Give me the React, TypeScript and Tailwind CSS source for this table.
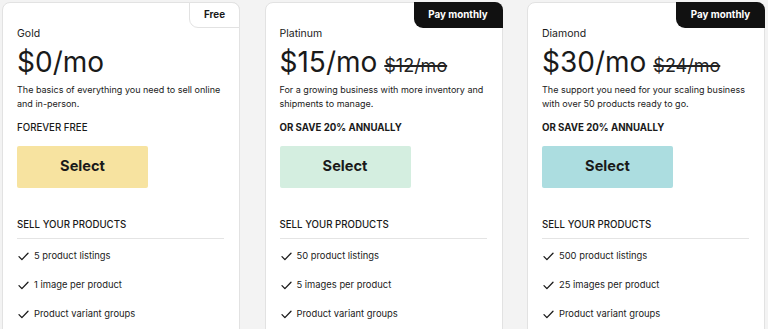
import React from "react";

type Plan = {
  name: string;
  price: string;
  old?: string;
  desc: string[];
  note: string;
  noteBold: boolean;
  btn: string;
  dark: boolean;
  items: string[];
};

const plans: Plan[] = [
  {
    name: "Gold",
    price: "$0/mo",
    desc: ["The basics of everything you need to sell online", "and in-person."],
    note: "FOREVER FREE",
    noteBold: false,
    btn: "bg-[#f7e3a0]",
    dark: false,
    items: ["5 product listings", "1 image per product", "Product variant groups"],
  },
  {
    name: "Platinum",
    price: "$15/mo",
    old: "$12/mo",
    desc: ["For a growing business with more inventory and", "shipments to manage."],
    note: "OR SAVE 20% ANNUALLY",
    noteBold: true,
    btn: "bg-[#d4eee0]",
    dark: true,
    items: ["50 product listings", "5 images per product", "Product variant groups"],
  },
  {
    name: "Diamond",
    price: "$30/mo",
    old: "$24/mo",
    desc: ["The support you need for your scaling business", "with over 50 products ready to go."],
    note: "OR SAVE 20% ANNUALLY",
    noteBold: true,
    btn: "bg-[#acdde0]",
    dark: true,
    items: ["500 product listings", "25 images per product", "Product variant groups"],
  },
];

function Check() {
  return (
    <svg width="11" height="9" viewBox="0 0 11 9" fill="none" className="shrink-0">
      <path d="M1 4.6 L3.9 7.6 L10 1.2" stroke="#1a1a1a" strokeWidth="1.3" strokeLinecap="round" strokeLinejoin="round" />
    </svg>
  );
}

function Card({ p }: { p: Plan }) {
  return (
    <div className="relative w-[238px] h-[340px] shrink-0 bg-white border border-[#e2e2e2] rounded-[8px] px-[14px] pt-[24px] text-[#1a1a1a]">
      {p.dark ? (
        <div className="absolute -top-px -right-px h-[26px] w-[89px] bg-[#111111] text-white rounded-tr-[8px] rounded-bl-[9px] flex items-center justify-center text-[9.8px] font-bold">
          Pay monthly
        </div>
      ) : (
        <div className="absolute -top-px -right-px h-[26px] w-[51px] bg-white border border-[#e2e2e2] rounded-tr-[8px] rounded-bl-[9px] flex items-center justify-center text-[9.8px] font-bold">
          Free
        </div>
      )}
      <div className="text-[10.5px] leading-[14px]">{p.name}</div>
      <div className="mt-[3px] h-[36px] flex items-baseline gap-[7px] leading-[36px] overflow-hidden">
        <span className="text-[28px] font-normal">{p.price}</span>
        {p.old && <span className="text-[18px] line-through decoration-[1.5px] text-[#222]">{p.old}</span>}
      </div>
      <div className="mt-[3px] text-[9px] leading-[14px]">
        {p.desc.map((d) => (
          <div key={d} className="whitespace-nowrap">{d}</div>
        ))}
      </div>
      <div className={`mt-[10px] text-[9.7px] leading-[14px] ${p.noteBold ? "font-bold" : "font-medium"}`}>{p.note}</div>
      <button className={`mt-[11px] w-[131px] h-[42px] rounded-[2px] ${p.btn} text-[14.6px] font-bold flex items-center justify-center`}>
        Select
      </button>
      <div className="mt-[30px] text-[9.7px] leading-[14px] font-medium pb-[6px] border-b border-[#e4e4e4] mr-[1px]">
        SELL YOUR PRODUCTS
      </div>
      <div className="mt-[10px] flex flex-col gap-[15px]">
        {p.items.map((it) => (
          <div key={it} className="flex items-center gap-[5px] h-[14px] text-[9.4px] pl-[1px]">
            <Check />
            <span>{it}</span>
          </div>
        ))}
      </div>
    </div>
  );
}

export default function App() {
  return (
    <div className="w-[768px] h-[329px] overflow-hidden bg-[#f3f3f3] pt-[2px] pl-[2px] flex gap-[24.5px]" style={{ fontFamily: "Inter, 'Noto Sans', sans-serif" }}>
      {plans.map((p) => (
        <Card key={p.name} p={p} />
      ))}
    </div>
  );
}
